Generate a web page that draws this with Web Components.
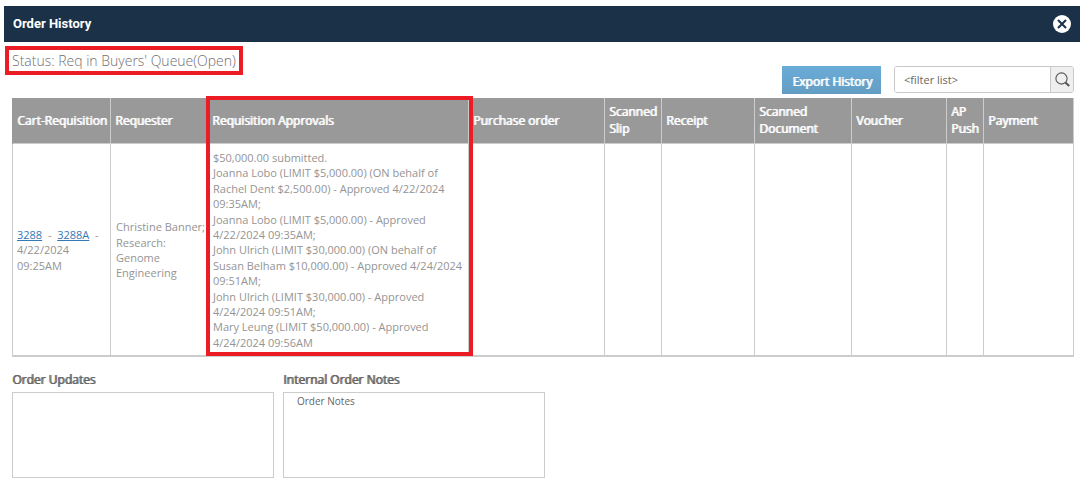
<!DOCTYPE html>
<html lang="en">
<head>
<meta charset="utf-8">
<meta name="viewport" content="width=device-width, initial-scale=1">
<title>Order History</title>
<style>
  body { margin: 0; background: #fff; color: #949494; font: 11px/1.4 "Open Sans", "Noto Sans", sans-serif; }
</style>
</head>
<body>
<order-history></order-history>

<template id="order-history-template">
  <style>
    :host { display: block; padding: 6px 0 8px 4px; }
    .content { padding: 0 6px 0 8px; }
    .tools { display: flex; justify-content: space-between; align-items: flex-start; padding-top: 4px; }
    status-callout { margin-left: -7px; }
    .actions { display: flex; gap: 13px; padding-top: 20px; }
    history-table { margin-top: 4px; }
    .notes { display: flex; gap: 9px; margin-top: 14px; }
  </style>
  <title-bar>Order History</title-bar>
  <div class="content">
    <div class="tools">
      <status-callout>Status: Req in Buyers' Queue(Open)</status-callout>
      <div class="actions">
        <export-button>Export History</export-button>
        <filter-box></filter-box>
      </div>
    </div>
    <history-table></history-table>
    <div class="notes">
      <notes-box label="Order Updates"></notes-box>
      <notes-box label="Internal Order Notes" value="Order Notes"></notes-box>
    </div>
  </div>
</template>

<template id="title-bar-template">
  <style>
    :host { display: flex; align-items: center; justify-content: space-between; height: 36px; padding: 0 9px; background: #1a3148; color: #fff; }
    h1 { margin: 0; font: 700 13px/18px Roboto, "Liberation Sans", sans-serif; }
    button { display: block; width: 18px; height: 18px; padding: 0; border: 0; background: none; cursor: pointer; }
    svg { display: block; }
  </style>
  <h1><slot></slot></h1>
  <button type="button" aria-label="Close">
    <svg width="18" height="18" viewBox="0 0 18 18" aria-hidden="true">
      <circle cx="9" cy="9" r="9" fill="#fff"/>
      <path d="M5 5l8 8M13 5l-8 8" stroke="#1a3148" stroke-width="2"/>
    </svg>
  </button>
</template>

<template id="status-callout-template">
  <style>
    :host { display: block; box-sizing: border-box; padding: 0 3px; border: 4px solid #ec1c24; font-size: 14px; line-height: 21px; font-weight: 300; color: #707070; }
  </style>
  <slot></slot>
</template>

<template id="export-button-template">
  <style>
    :host { display: block; }
    button { height: 28px; padding: 2px 9px 0 10px; border: 0; background: linear-gradient(#6aacd8, #649dc3); color: #fff; font: 12px/17px "Open Sans", "Noto Sans", sans-serif; text-shadow: 1px 0 currentColor; cursor: pointer; }
  </style>
  <button type="button"><slot></slot></button>
</template>

<template id="filter-box-template">
  <style>
    :host { display: block; }
    form { display: flex; box-sizing: border-box; width: 180px; height: 27px; border: 1px solid #c8c8c8; border-radius: 3px; overflow: hidden; }
    input { flex: 1; min-width: 0; margin: 0; padding: 0 9px; border: 0; outline: 0; background: #fff; color: #555; font: 11px/17px "Open Sans", "Noto Sans", sans-serif; }
    input::placeholder { color: #666; opacity: 1; }
    button { display: flex; align-items: center; justify-content: center; width: 23px; padding: 0; border: 0; border-left: 1px solid #c8c8c8; background: #efefef; cursor: pointer; }
  </style>
  <form>
    <input type="text" aria-label="Filter list" placeholder="&lt;filter list&gt;">
    <button type="button" aria-label="Search">
      <svg width="15" height="15" viewBox="0 0 15 15" aria-hidden="true" fill="none" stroke="#555">
        <circle cx="6.5" cy="6.5" r="5.6" stroke-width="1.1"/>
        <path d="M10.4 10.4l3.8 3.6" stroke-width="2"/>
      </svg>
    </button>
  </form>
</template>

<template id="history-table-template">
  <style>
    :host { display: block; position: relative; }
    table { width: 100%; table-layout: fixed; border-collapse: separate; border-spacing: 0; border-left: 1px solid #ccc; border-bottom: 2px solid #ccc; }
    th, td { border-right: 1px solid #ccc; vertical-align: middle; text-align: left; }
    th { padding: 5px 0 6px 4px; height: 34px; border-bottom: 1px solid #ccc; background: #999; color: #fff; font-size: 12px; line-height: 17px; font-weight: 400; text-shadow: 1px 0 currentColor; }
    th:first-child { box-shadow: -1px 0 #999; }
    td { padding: 6px 0 5px 5px; }
    td:first-child { padding-left: 4px; }
    a { color: #337ab7; text-decoration: underline; }
    .ids { white-space: pre; }
    .highlight { position: absolute; box-sizing: border-box; top: -2px; bottom: 1px; left: calc(100% * 195 / 1062 - 1px); width: calc(100% * 267 / 1062); border: 4px solid #ec1c24; pointer-events: none; }
  </style>
  <table>
    <colgroup>
      <col style="width:98px"><col style="width:97px"><col style="width:261px"><col style="width:136px"><col style="width:57px">
      <col style="width:93px"><col style="width:97px"><col style="width:95px"><col style="width:37px"><col style="width:90px">
    </colgroup>
    <thead>
      <tr>
        <th scope="col">Cart-Requisition</th>
        <th scope="col">Requester</th>
        <th scope="col">Requisition Approvals</th>
        <th scope="col">Purchase order</th>
        <th scope="col">Scanned Slip</th>
        <th scope="col">Receipt</th>
        <th scope="col">Scanned Document</th>
        <th scope="col">Voucher</th>
        <th scope="col">AP Push</th>
        <th scope="col">Payment</th>
      </tr>
    </thead>
    <tbody>
      <tr>
        <td><span class="ids"><a href="#3288">3288</a>  -  <a href="#3288A">3288A</a>  -</span><br>4/22/2024<br>09:25AM</td>
        <td>Christine Banner;<br>Research:<br>Genome<br>Engineering</td>
        <td>$50,000.00 submitted.<br>Joanna Lobo (LIMIT $5,000.00) (ON behalf of<br>Rachel Dent $2,500.00) - Approved 4/22/2024<br>09:35AM;<br>Joanna Lobo (LIMIT $5,000.00) - Approved<br>4/22/2024 09:35AM;<br>John Ulrich (LIMIT $30,000.00) (ON behalf of<br>Susan Belham $10,000.00) - Approved 4/24/2024<br>09:51AM;<br>John Ulrich (LIMIT $30,000.00) - Approved<br>4/24/2024 09:51AM;<br>Mary Leung (LIMIT $50,000.00) - Approved<br>4/24/2024 09:56AM</td>
        <td></td><td></td><td></td><td></td><td></td><td></td><td></td>
      </tr>
    </tbody>
  </table>
  <div class="highlight"></div>
</template>

<template id="notes-box-template">
  <style>
    :host { display: block; flex: 0 1 262px; min-width: 0; }
    label { display: block; margin-bottom: 3px; color: #666; font-size: 12px; line-height: 18px; text-shadow: 1px 0 currentColor; }
    textarea { display: block; box-sizing: border-box; width: 100%; height: 86px; margin: 0; padding: 0 13px; border: 1px solid #ccc; outline: 0; background: #fff; resize: none; color: #666; font: 10px/16px "Open Sans", "Noto Sans", sans-serif; }
  </style>
  <label for="text"></label>
  <textarea id="text"></textarea>
</template>

<script>
  class TemplateElement extends HTMLElement {
    constructor() {
      super();
      const template = document.getElementById(this.localName + "-template");
      this.attachShadow({ mode: "open" }).append(template.content.cloneNode(true));
    }
  }

  class NotesBox extends TemplateElement {
    connectedCallback() {
      this.shadowRoot.querySelector("label").textContent = this.getAttribute("label");
      this.shadowRoot.querySelector("textarea").value = this.getAttribute("value") || "";
    }
  }

  customElements.define("title-bar", class extends TemplateElement {});
  customElements.define("status-callout", class extends TemplateElement {});
  customElements.define("export-button", class extends TemplateElement {});
  customElements.define("filter-box", class extends TemplateElement {});
  customElements.define("history-table", class extends TemplateElement {});
  customElements.define("notes-box", NotesBox);
  customElements.define("order-history", class extends TemplateElement {});
</script>
</body>
</html>
